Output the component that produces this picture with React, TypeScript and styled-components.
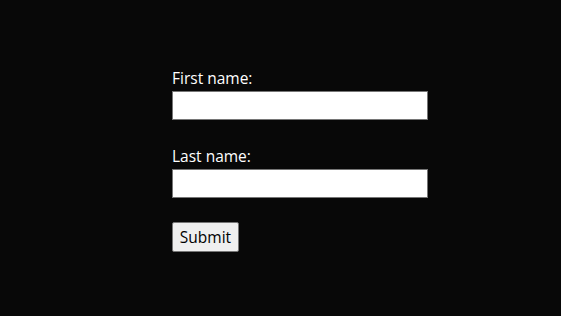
import React from "react";
import styled, { createGlobalStyle } from "styled-components";

const GlobalStyle = createGlobalStyle`
  html, body {
    margin: 0;
    padding: 0;
    background: #080808;
  }
  body {
    font-family: "Open Sans", "Liberation Sans", sans-serif;
    color: #ffffff;
  }
`;

const Page = styled.div`
  min-height: 316px;
  box-sizing: border-box;
  padding: 68px 0 0 172px;
`;

const Form = styled.form`
  display: flex;
  flex-direction: column;
  align-items: flex-start;
  width: 256px;
`;

const Field = styled.div<{ $gap?: number }>`
  display: flex;
  flex-direction: column;
  margin-top: ${(p) => p.$gap ?? 0}px;
`;

const Label = styled.label`
  display: block;
  font-size: 15.5px;
  line-height: 20px;
  height: 20px;
  color: #ffffff;
`;

const Input = styled.input`
  box-sizing: border-box;
  width: 256px;
  height: 29px;
  margin: 3px 0 0;
  padding: 1px 2px;
  border: 1px solid #767676;
  border-radius: 0;
  background: #ffffff;
  font-family: inherit;
  font-size: 15px;
  outline: none;
`;

const Button = styled.button`
  box-sizing: border-box;
  margin-top: 24px;
  height: 30px;
  width: 67px;
  padding: 0 5px;
  border: 1px solid #767676;
  border-radius: 2px;
  background: #efefef;
  color: #000000;
  font-family: "Open Sans", "Liberation Sans", sans-serif;
  font-size: 15.5px;
  line-height: 28px;
  cursor: pointer;
`;

export default function App() {
  return (
    <>
      <GlobalStyle />
      <Page>
        <Form onSubmit={(e) => e.preventDefault()}>
          <Field>
            <Label htmlFor="fname">First name:</Label>
            <Input id="fname" name="fname" type="text" />
          </Field>
          <Field $gap={26}>
            <Label htmlFor="lname">Last name:</Label>
            <Input id="lname" name="lname" type="text" />
          </Field>
          <Button type="submit">Submit</Button>
        </Form>
      </Page>
    </>
  );
}
